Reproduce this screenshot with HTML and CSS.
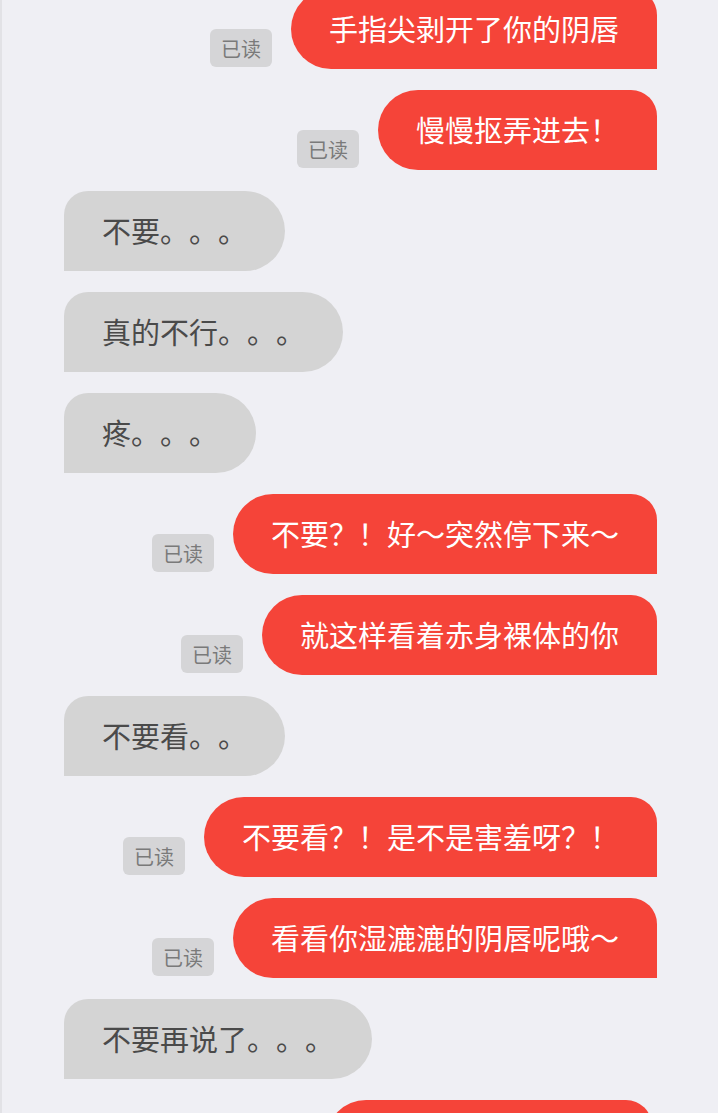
FILE: index.html
```html
<!DOCTYPE html>
<html lang="zh-CN">
<head>
    <meta charset="UTF-8">
    <meta name="viewport" content="width=device-width, initial-scale=1.0">
    <title>聊天</title>
    <link rel="stylesheet" href="styles.css">
</head>
<body>
    <div class="chat">
        <div class="row me">
            <span class="read">已读</span>
            <div class="bubble">手指尖剥开了你的阴唇</div>
        </div>
        <div class="row me">
            <span class="read">已读</span>
            <div class="bubble">慢慢抠弄进去！</div>
        </div>
        <div class="row other">
            <div class="bubble">不要。。。</div>
        </div>
        <div class="row other">
            <div class="bubble">真的不行。。。</div>
        </div>
        <div class="row other">
            <div class="bubble">疼。。。</div>
        </div>
        <div class="row me">
            <span class="read">已读</span>
            <div class="bubble">不要？！好～突然停下来～</div>
        </div>
        <div class="row me">
            <span class="read">已读</span>
            <div class="bubble">就这样看着赤身裸体的你</div>
        </div>
        <div class="row other">
            <div class="bubble">不要看。。</div>
        </div>
        <div class="row me">
            <span class="read">已读</span>
            <div class="bubble">不要看？！是不是害羞呀？！</div>
        </div>
        <div class="row me">
            <span class="read">已读</span>
            <div class="bubble">看看你湿漉漉的阴唇呢哦～</div>
        </div>
        <div class="row other">
            <div class="bubble">不要再说了。。。</div>
        </div>
        <div class="row me">
            <div class="bubble last">&nbsp;</div>
        </div>
    </div>
</body>
</html>
```

FILE: styles.css
```css
body {
    margin: 0;
    padding: 0;
    background-color: #efeff4;
    font-family: 'Noto Sans CJK SC', 'Noto Sans', sans-serif;
    overflow: hidden;
    height: 1113px;
    border-left: 2px solid #e2e2e6;
    box-sizing: border-box;
}
.chat {
    display: flex;
    flex-direction: column;
    gap: 21px;
    margin-top: -11px;
    padding: 0 61px 0 62px;
}
.row {
    display: flex;
    align-items: flex-end;
    gap: 19px;
}
.row.me {
    justify-content: flex-end;
}
.row.other {
    justify-content: flex-start;
}
.bubble {
    height: 80px;
    display: flex;
    align-items: center;
    padding: 0 38px 2px;
    font-size: 29px;
    white-space: nowrap;
    box-sizing: border-box;
    text-spacing-trim: space-all;
}
.me .bubble {
    background-color: #f54439;
    color: #fff;
    border-radius: 40px 26px 0 40px;
}
.other .bubble {
    background-color: #d4d4d4;
    color: #4a4a4a;
    border-radius: 24px 40px 40px 0;
}
.bubble.last {
    width: 326px;
    margin-right: 5px;
}
.read {
    width: 62px;
    height: 38px;
    margin-bottom: 2px;
    display: flex;
    align-items: center;
    justify-content: center;
    background-color: #d5d5d7;
    color: #7a7a7a;
    font-size: 20px;
    border-radius: 6px;
}
```
